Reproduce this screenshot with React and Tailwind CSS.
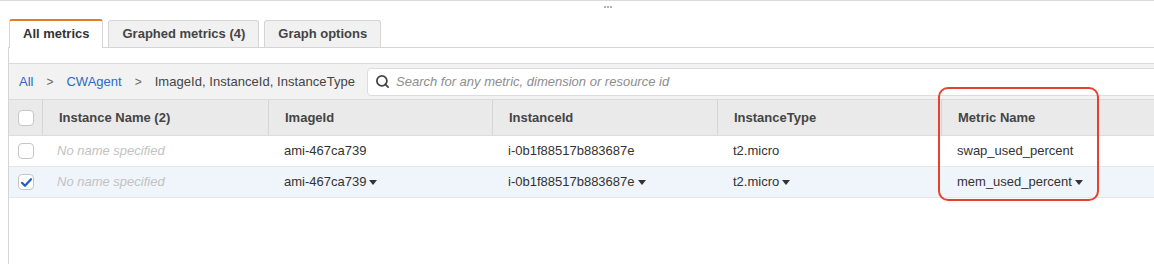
import { Search } from 'lucide-react'

const cols = [
  { key: 'name', label: 'Instance Name (2)', w: 'w-[226px]' },
  { key: 'image', label: 'ImageId', w: 'w-[224px]' },
  { key: 'instance', label: 'InstanceId', w: 'w-[225px]' },
  { key: 'type', label: 'InstanceType', w: 'w-[224px]' },
  { key: 'metric', label: 'Metric Name', w: 'w-[240px]' },
]

const rows = [
  {
    id: 1,
    checked: false,
    image: 'ami-467ca739',
    instance: 'i-0b1f88517b883687e',
    type: 't2.micro',
    metric: 'swap_used_percent',
  },
  {
    id: 2,
    checked: true,
    image: 'ami-467ca739',
    instance: 'i-0b1f88517b883687e',
    type: 't2.micro',
    metric: 'mem_used_percent',
  },
]

function Caret() {
  return (
    <svg width="8" height="5" viewBox="0 0 8 5" className="ml-[3px] mt-[1px] inline-block">
      <path d="M0 0h8L4 5z" fill="#333" />
    </svg>
  )
}

function Checkbox({ checked }) {
  return (
    <div className="w-[16px] h-[16px] rounded-[4px] border border-[#c6c6c6] bg-white flex items-center justify-center">
      {checked && (
        <svg width="11" height="9" viewBox="0 0 11 9">
          <path d="M1 4.8l3 3L10 1.2" fill="none" stroke="#1f5fbf" strokeWidth="2.2" strokeLinecap="round" strokeLinejoin="round" />
        </svg>
      )}
    </div>
  )
}

function Tab({ label, active }) {
  return (
    <div
      className={
        active
          ? 'h-[29px] px-[13px] flex items-center rounded-t-[3px] border border-b-0 border-[#d5d5d5] border-t-2 border-t-[#e07b28] bg-white text-[13px] font-bold text-[#333] relative z-10 -mb-px pb-px'
          : 'h-[27px] px-[13px] flex items-center rounded-t-[3px] border border-b-0 border-[#d5d5d5] bg-[#f1f1f1] text-[13px] font-bold text-[#444]'
      }
    >
      {label}
    </div>
  )
}

export default function App() {
  return (
    <div className="w-[1154px] h-[264px] overflow-hidden bg-white relative font-['Liberation_Sans',Arial,sans-serif]">
      <div className="h-[2px] border-t border-[#d9d9d9]" />
      <div className="flex justify-center gap-[1px] pl-[62px] mt-[4px]">
        <span className="w-[2px] h-[2px] rounded-full bg-[#9a9a9a]" />
        <span className="w-[2px] h-[2px] rounded-full bg-[#9a9a9a]" />
        <span className="w-[2px] h-[2px] rounded-full bg-[#9a9a9a]" />
      </div>

      <div className="flex items-end gap-[5px] ml-[9px] mt-[11px]">
        <Tab label="All metrics" active />
        <Tab label="Graphed metrics (4)" />
        <Tab label="Graph options" />
      </div>

      <div className="ml-[8px] w-[1200px] border-t border-l border-[#d5d5d5]">
        <div className="h-[15px]" />
        <div className="h-[37px] bg-[#f2f2f2] border-t border-b border-[#dadada] flex items-center text-[13px]">
          <span className="ml-[10px] text-[#2a6ac4]">All</span>
          <span className="mx-[13px] text-[#666] text-[12px]">&gt;</span>
          <span className="text-[#2a6ac4]">CWAgent</span>
          <span className="mx-[13px] text-[#666] text-[12px]">&gt;</span>
          <span className="text-[#444] tracking-[0.05px]">ImageId, InstanceId, InstanceType</span>
          <div className="ml-[12px] flex-1 h-[28px] bg-white border border-[#dcdcdc] rounded-l-[4px] flex items-center pl-[7px]">
            <Search size={15} strokeWidth={2.8} color="#444" />
            <span className="ml-[6px] italic text-[#8d8d8d]">Search for any metric, dimension or resource id</span>
          </div>
        </div>

        <div className="h-[36px] flex bg-[#eaeaea] border-b border-[#dcdcdc] text-[13px] font-bold text-[#444]">
          <div className="w-[34px] flex items-center justify-center border-r border-[#d6d6d6]">
            <Checkbox />
          </div>
          {cols.map((c, i) => (
            <div
              key={c.key}
              className={`${c.w} flex items-center pl-[16px] ${i < cols.length - 1 ? 'border-r border-[#d6d6d6]' : ''}`}
            >
              {c.label}
            </div>
          ))}
        </div>

        {rows.map((r) => (
          <div
            key={r.id}
            className={`h-[31px] flex border-b border-[#e6e6e6] text-[13px] text-[#333] ${r.checked ? 'bg-[#f0f5fb]' : 'bg-white'}`}
          >
            <div className="w-[34px] flex items-center justify-center">
              <Checkbox checked={r.checked} />
            </div>
            <div className="w-[226px] flex items-center pl-[14px] italic text-[#c2c2c2]">No name specified</div>
            <div className="w-[224px] flex items-center pl-[15px]">
              {r.image}
              {r.checked && <Caret />}
            </div>
            <div className="w-[225px] flex items-center pl-[15px]">
              {r.instance}
              {r.checked && <Caret />}
            </div>
            <div className="w-[224px] flex items-center pl-[15px]">
              {r.type}
              {r.checked && <Caret />}
            </div>
            <div className="w-[240px] flex items-center pl-[15px]">
              {r.metric}
              {r.checked && <Caret />}
            </div>
          </div>
        ))}
        <div className="h-[80px] bg-white" />
      </div>

      <div className="absolute left-[938px] top-[87px] w-[161px] h-[114px] rounded-[10px] border-2 border-[#e5412c]" />
    </div>
  )
}
